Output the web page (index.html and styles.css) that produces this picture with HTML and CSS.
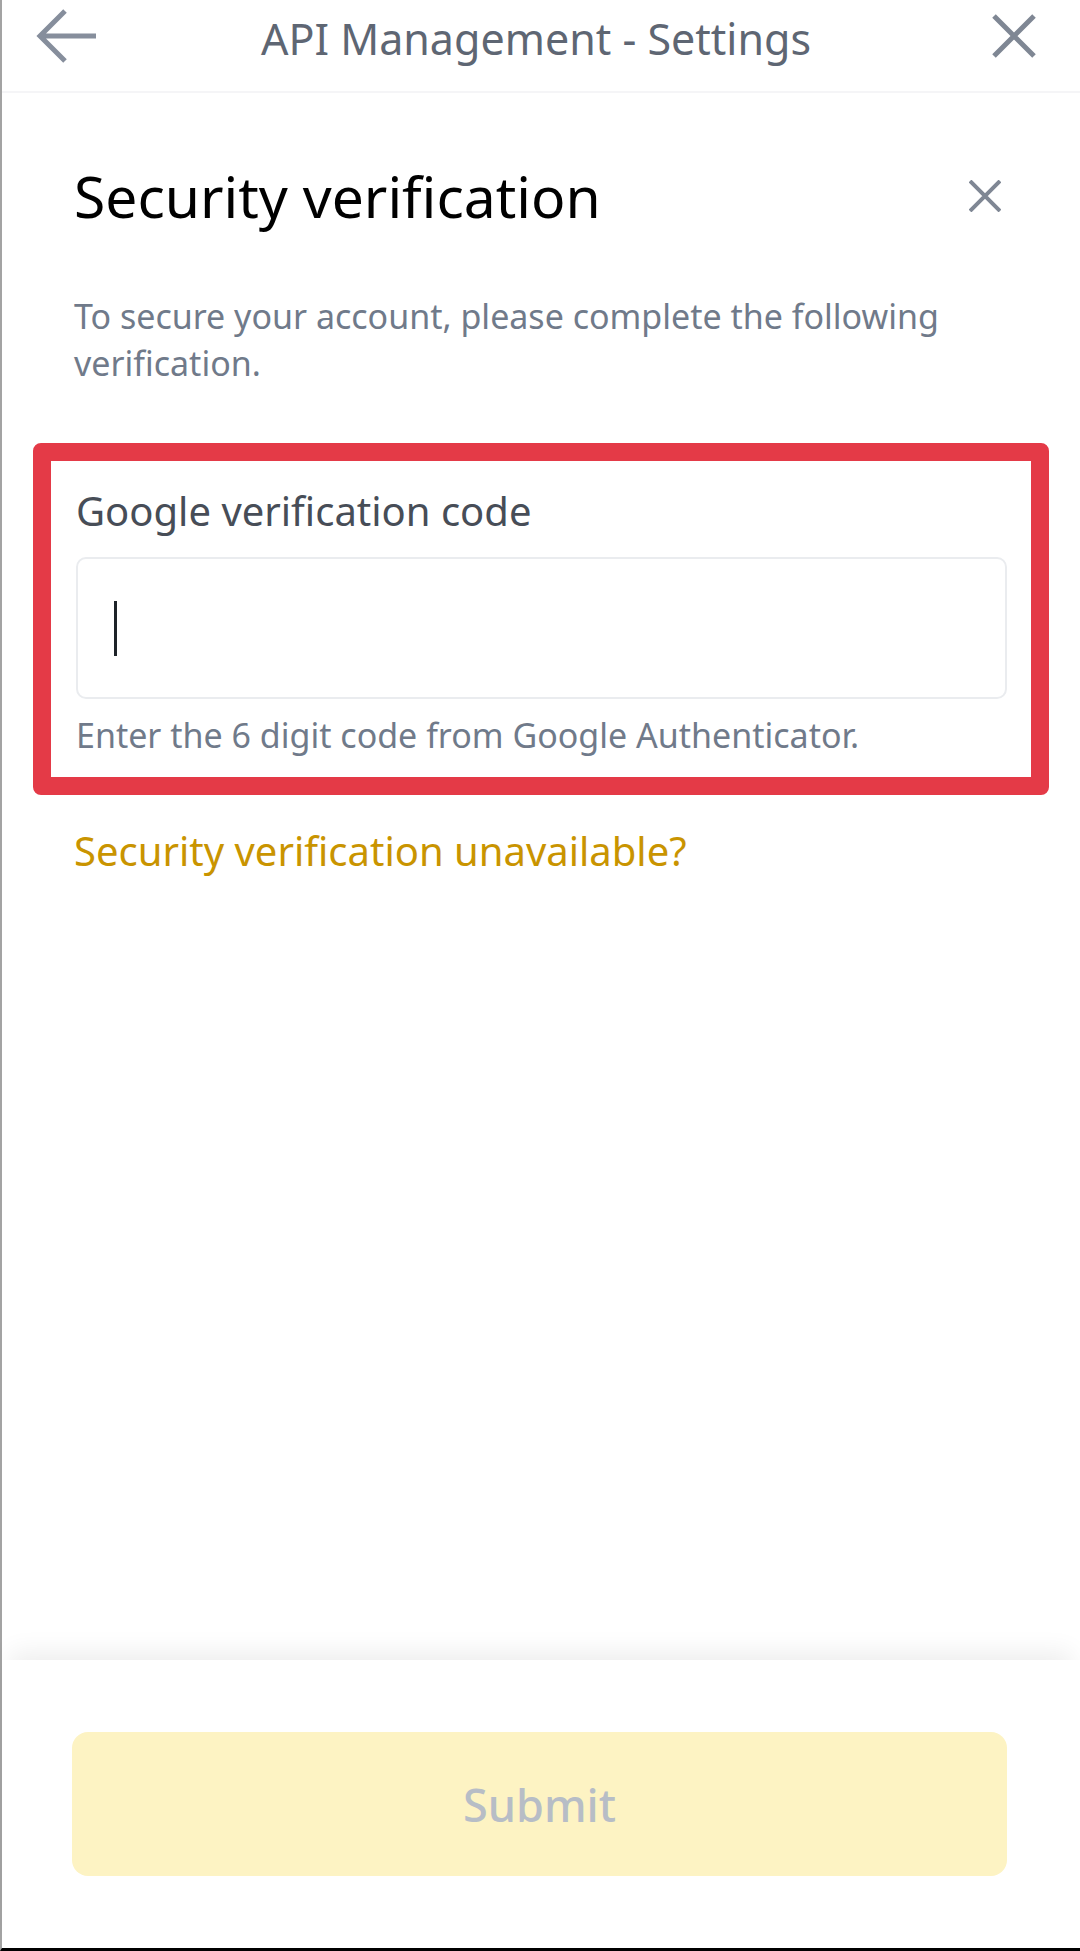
FILE: index.html
```html
<!DOCTYPE html>
<html lang="en">

<head>
    <meta charset="UTF-8">
    <meta name="viewport" content="width=device-width, initial-scale=1.0">
    <title>API Management - Settings</title>
    <link rel="stylesheet" href="styles.css">
</head>

<body>
    <div class="page">
        <header class="topbar">
            <button class="iconBtn back" aria-label="Back">
                <svg width="60" height="56" viewBox="0 0 60 56">
                    <path d="M60 28H4M29 3L4 28l25 25" fill="none" stroke="#868e9c" stroke-width="5" />
                </svg>
            </button>
            <h1 class="title">API Management - Settings</h1>
            <button class="iconBtn close" aria-label="Close">
                <svg width="44" height="44" viewBox="0 0 44 44">
                    <path d="M2 2L42 42M42 2L2 42" fill="none" stroke="#7f8794" stroke-width="5" />
                </svg>
            </button>
        </header>

        <main class="content">
            <div class="dialogHead">
                <h2 class="heading">Security verification</h2>
                <button class="iconBtn dialogClose" aria-label="Close dialog">
                    <svg width="32" height="32" viewBox="0 0 32 32">
                        <path d="M1 1L31 31M31 1L1 31" fill="none" stroke="#7f8794" stroke-width="4" />
                    </svg>
                </button>
            </div>
            <p class="desc">To secure your account, please complete the following verification.</p>

            <div class="field">
                <label class="label" for="code">Google verification code</label>
                <div class="inputBox">
                    <span class="caret"></span>
                    <input id="code" class="input" type="text" inputmode="numeric">
                </div>
                <p class="hint">Enter the 6 digit code from Google Authenticator.</p>
            </div>

            <a class="link" href="#">Security verification unavailable?</a>
        </main>

        <footer class="footer">
            <button class="submit" disabled>Submit</button>
        </footer>
    </div>
</body>

</html>
```

FILE: styles.css
```css
* {
    padding: 0;
    margin: 0;
    box-sizing: border-box;
}

body {
    font-family: "Noto Sans", Roboto, sans-serif;
    background-color: #fff;
}

.page {
    width: 1080px;
    height: 1951px;
    display: flex;
    flex-direction: column;
    border-left: 2px solid #a3a3a3;
    border-bottom: 3px solid #000;
}

.iconBtn {
    border: none;
    background: none;
    display: flex;
}

.topbar {
    height: 93px;
    display: grid;
    grid-template-columns: 1fr auto 1fr;
    align-items: start;
    border-bottom: 2px solid #f5f5f7;
    padding: 0 44px 0 34px;
}

.back {
    margin-top: 8px;
    justify-self: start;
}

.close {
    margin-top: 14px;
    justify-self: end;
}

.title {
    font-size: 43px;
    font-weight: 400;
    line-height: 78px;
    color: #5e6673;
}

.content {
    flex: 1;
    padding: 0 73px 0 72px;
}

.dialogHead {
    display: flex;
    justify-content: space-between;
    align-items: center;
    margin-top: 67px;
}

.heading {
    font-size: 57px;
    font-weight: 400;
    line-height: 72px;
    color: #000;
}

.dialogClose {
    margin-right: 6px;
}

.desc {
    margin-top: 61px;
    font-size: 34px;
    line-height: 47px;
    color: #707a8a;
}

.field {
    margin: 56px -42px 0 -41px;
    border: 18px solid #e43a47;
    border-radius: 8px;
    padding: 25px 24px 20px 25px;
}

.label {
    display: block;
    font-size: 40px;
    line-height: 50px;
    color: #474d57;
}

.inputBox {
    margin-top: 21px;
    height: 142px;
    border: 2px solid #eaecef;
    border-radius: 10px;
    display: flex;
    align-items: center;
    padding-left: 36px;
}

.caret {
    width: 3px;
    height: 55px;
    background-color: #1e2329;
}

.input {
    flex: 1;
    border: none;
    outline: none;
    font-size: 36px;
    background: none;
}

.hint {
    margin-top: 14px;
    font-size: 34px;
    line-height: 44px;
    color: #707a8a;
}

.link {
    display: block;
    margin-top: 31px;
    font-size: 40px;
    line-height: 50px;
    color: #c99400;
    text-decoration: none;
}

.footer {
    height: 288px;
    box-shadow: 0 -16px 24px -8px rgba(0, 0, 0, 0.07);
    padding: 72px 73px 0 70px;
}

.submit {
    width: 100%;
    height: 144px;
    border: none;
    border-radius: 16px;
    background-color: #fdf3c3;
    color: #b7bdc6;
    font-family: "Noto Sans", Roboto, sans-serif;
    font-size: 45px;
    font-weight: 500;
}
```
